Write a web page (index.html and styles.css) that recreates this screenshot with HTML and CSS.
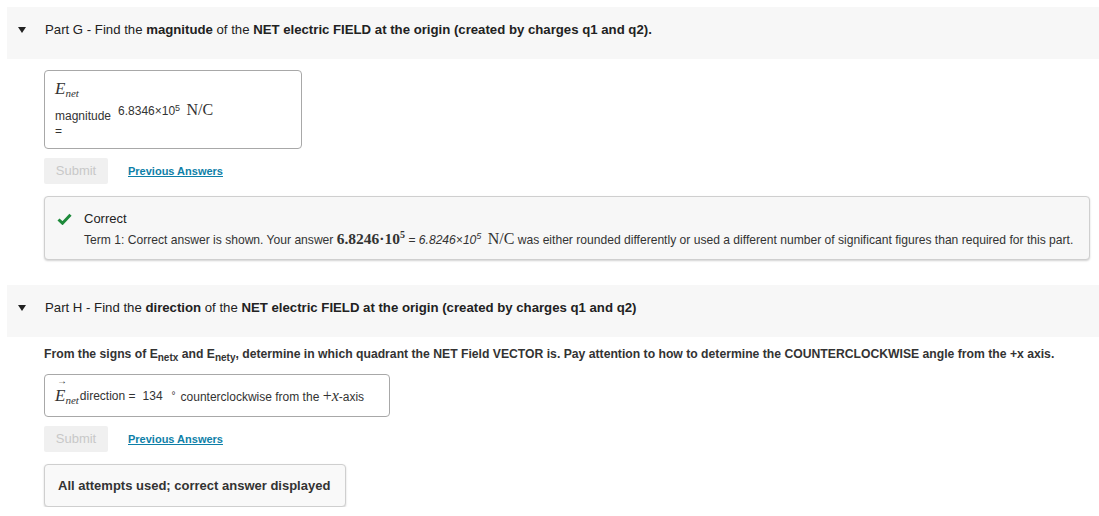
FILE: index.html
```html
<!DOCTYPE html>
<html>
<head>
<meta charset="utf-8">
<link rel="stylesheet" href="styles.css">
</head>
<body>
<div class="page">
  <div class="part-head">
    <span class="tri"></span>
    <span class="head-text">Part G - Find the <b>magnitude</b> of the <b>NET electric FIELD at the origin (created by charges q1 and q2).</b></span>
  </div>
  <div class="part-body">
    <div class="ans-box mag">
      <div class="math ename"><i>E</i><i class="sub">net</i></div>
      <div class="mag-row">
        <div class="mag-label">magnitude<br>=</div>
        <div class="mag-val">6.8346×10<sup>5</sup> <span class="unit">N/C</span></div>
      </div>
    </div>
    <div class="actions">
      <span class="submit">Submit</span>
      <a class="prev">Previous Answers</a>
    </div>
    <div class="feedback">
      <svg class="check" width="15" height="12" viewBox="0 0 15 12"><path d="M1.5 6.5 L5.5 10.2 L13.5 1.8" fill="none" stroke="#1e8a3b" stroke-width="3"/></svg>
      <div class="fb-text">
        <div class="fb-title">Correct</div>
        <div class="fb-line">Term 1: Correct answer is shown. Your answer <span class="bmath">6.8246·10<sup>5</sup></span> = <i>6.8246×10<sup>5</sup></i> <span class="unit">N/C</span> was either rounded differently or used a different number of significant figures than required for this part.</div>
      </div>
    </div>
  </div>

  <div class="part-head h2">
    <span class="tri"></span>
    <span class="head-text">Part H - Find the <b>direction</b> of the <b>NET electric FIELD at the origin (created by charges q1 and q2)</b></span>
  </div>
  <div class="part-body">
    <p class="instr">From the signs of E<sub>netx</sub> and E<sub>nety</sub>, determine in which quadrant the NET Field VECTOR is. Pay attention to how to determine the COUNTERCLOCKWISE angle from the +x axis.</p>
    <div class="ans-box dir">
      <span class="math evec"><i>E</i><span class="arrow">→</span><i class="sub">net</i></span>
      <span class="dir-label">direction =</span>
      <span class="dir-val">134</span>
      <span class="deg">°</span>
      <span class="dir-rest">counterclockwise from the <span class="math">+<i>x</i></span>-axis</span>
    </div>
    <div class="actions">
      <span class="submit">Submit</span>
      <a class="prev">Previous Answers</a>
    </div>
    <div class="attempts">All attempts used; correct answer displayed</div>
  </div>
</div>
</body>
</html>
```
FILE: styles.css
```css
html, body { margin: 0; padding: 0; background: #fff; }
body { font-family: "Liberation Sans", Arial, sans-serif; color: #333; }
.page { padding-top: 7px; padding-left: 7px; }
.part-head {
  background: #f7f7f7;
  height: 52px;
  box-sizing: border-box;
  padding-bottom: 8px;
  display: flex;
  align-items: center;
  font-size: 13.2px;
  color: #222;
}
.part-head.h2 { margin-top: 25px; }
.tri {
  width: 0; height: 0;
  border-left: 4.5px solid transparent;
  border-right: 4.5px solid transparent;
  border-top: 6px solid #222;
  margin-left: 11px;
  margin-right: 19px;
  margin-top: 1px;
}
.part-body { padding-left: 37px; }
.ans-box {
  border: 1px solid #a8a8a8;
  border-radius: 4px;
  box-sizing: border-box;
}
.ans-box.mag { margin-top: 11px; width: 258px; height: 79px; padding: 9px 0 0 10px; }
.math { font-family: "Liberation Serif", "Times New Roman", serif; }
.ename { font-size: 17px; line-height: 18px; }
.ename .sub { font-size: 11px; vertical-align: -3px; }
.sub { font-size: 10px; vertical-align: -3px; }
.mag-row { display: flex; margin-top: 4px; }
.mag-label { font-size: 12px; line-height: 15px; padding-top: 3px; }
.mag-val { font-size: 12px; margin-left: 7px; line-height: 16px; margin-top: -6px; }
.mag-val sup { font-size: 9px; vertical-align: 4px; }
.unit { font-family: "Liberation Serif", "Times New Roman", serif; font-size: 16px; margin-left: 3px; }
.actions { display: flex; align-items: center; margin-top: 9px; height: 26px; }
.submit {
  width: 64px; height: 26px; line-height: 26px;
  background: #f0f0f0; color: #c8c8c8; text-align: center;
  font-size: 13px; border-radius: 2px;
}
.prev {
  margin-left: 20px; color: #0e7fa8; font-weight: bold; font-size: 11px;
  text-decoration: underline;
}
.feedback {
  margin-top: 12px;
  width: 1046px; box-sizing: border-box;
  height: 64px;
  background: #f7f7f7;
  border: 1px solid #cfcfcf;
  border-radius: 4px;
  box-shadow: 0 1px 2px rgba(0,0,0,0.18);
  display: flex;
  align-items: flex-start;
  padding: 14px 0 0 12px;
}
.check { margin-top: 2px; margin-right: 12px; }
.fb-title { font-size: 13px; line-height: 15px; color: #222; }
.fb-line { font-size: 12.1px; line-height: 17px; margin-top: 0px; color: #333; white-space: nowrap; }
.bmath { font-family: "Liberation Serif", "Times New Roman", serif; font-weight: bold; font-size: 15.5px; }
.fb-line sup { font-size: 10px; }
.fb-line i sup { font-size: 9px; }
.instr { margin: 10px 0 0 0; font-size: 12.2px; font-weight: bold; line-height: 14px; color: #333; }
.instr sub { font-size: 10px; vertical-align: -3px; }
.ans-box.dir {
  margin-top: 9px; width: 346px; height: 43px;
  display: flex; align-items: center; padding-left: 10px; font-size: 12px;
}
.evec { position: relative; font-size: 17px; }
.evec .sub { font-size: 11px; }
.evec .arrow { position: absolute; left: 2px; top: -11px; font-size: 10px; font-style: normal; }
.dir-label { margin-left: 1px; }
.dir-val { margin-left: 7px; }
.deg { margin-left: 9px; vertical-align: 7px; font-size: 10px; }
.dir-rest { margin-left: 5px; }
.dir-rest .math { font-size: 16px; }
.attempts {
  margin-top: 12px;
  width: 302px; height: 43px; box-sizing: border-box;
  border: 1px solid #cfcfcf; border-radius: 4px;
  background: #f9f9f9;
  box-shadow: 0 1px 2px rgba(0,0,0,0.18);
  font-weight: bold; font-size: 13px; color: #333;
  display: flex; align-items: center; padding-left: 13px;
}
```
